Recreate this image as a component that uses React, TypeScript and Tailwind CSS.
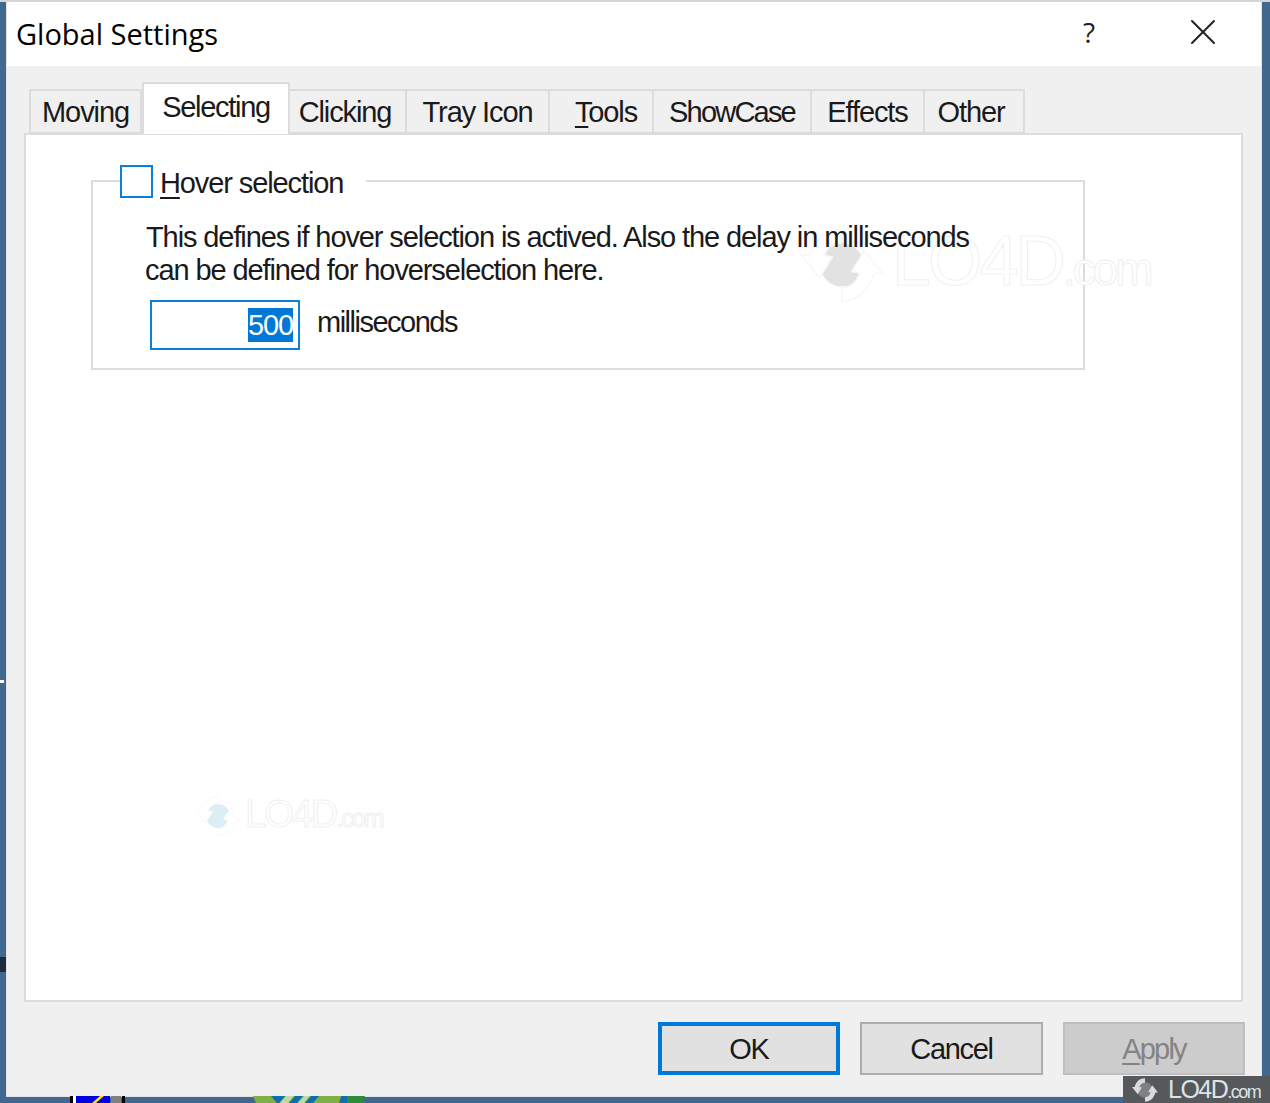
import React from 'react';
import { X } from 'lucide-react';

const tabs = [
  { label: 'Moving', w: 'w-[113px]', extra: 'tracking-[-1.1px]' },
  { label: 'Selecting', w: 'w-[148px]', extra: 'tracking-[-1.3px]', active: true },
  { label: 'Clicking', w: 'w-[117px]', extra: 'pr-[5px] tracking-[-1.1px]' },
  { label: 'Tray Icon', w: 'w-[143px]', extra: 'tracking-[-1.1px]' },
  { label: 'Tools', w: 'w-[104px]', extra: 'pl-[10px] tracking-[-1.1px]', mnemonic: true },
  { label: 'ShowCase', w: 'w-[158px]', extra: 'tracking-[-1.8px]' },
  { label: 'Effects', w: 'w-[113px]', extra: 'tracking-[-1.1px]' },
  { label: 'Other', w: 'w-[100px]', extra: 'pr-[6px] tracking-[-1.1px]' },
];

const Watermark = ({ className, big }: { className: string; big?: boolean }) => (
  <div className={`absolute flex items-center pointer-events-none ${className}`}>
    <svg viewBox="0 0 100 100" className={big ? 'w-[100px] h-[80px]' : 'w-[54px] h-[44px]'}>
      <circle cx="50" cy="50" r="27" fill={big ? '#e2e2e2' : '#dcedf5'} />
      <path d="M50 5 C30 5 16 18 10 38 L0 38 L22 66 L38 40 L28 38 C32 28 40 22 50 22 Z" fill="#ffffff" stroke="#f7f7f7" strokeWidth="2" />
      <path d="M50 95 C70 95 84 82 90 60 L100 60 L78 32 L62 58 L72 60 C68 72 60 78 50 78 Z" fill="#ffffff" stroke="#f7f7f7" strokeWidth="2" />
    </svg>
    <span className={`font-['Liberation_Sans',sans-serif] text-white ${big ? 'text-[70px] leading-[60px] tracking-[-3px]' : 'text-[38px] leading-[34px] tracking-[-2px]'}`} style={{ WebkitTextStroke: '1px #f0f0f0' }}>
      LO4D<span className={big ? 'text-[46px]' : 'text-[25px]'}>.com</span>
    </span>
  </div>
);

export default function App() {
  return (
    <div className="relative w-[1270px] h-[1103px] overflow-hidden bg-[#41688f] font-['Liberation_Sans',sans-serif] text-[#1a1a1a]">
      {/* bits of the desktop showing under the dialog */}
      <svg className="absolute left-[70px] top-[1096px]" width="56" height="7" viewBox="0 0 56 7">
        <rect x="0" width="3" height="7" fill="#000" />
        <rect x="3" width="3" height="7" fill="#fff" />
        <rect x="6" width="34" height="7" fill="#0000e0" />
        <path d="M22 7 L30 0 L34 0 L26 7 Z" fill="#ffe000" />
        <rect x="41" width="10" height="7" fill="#808080" />
        <rect x="52" width="3" height="7" fill="#000" />
      </svg>
      <svg className="absolute left-[253px] top-[1096px]" width="114" height="7" viewBox="0 0 114 7">
        <path d="M0 0 H88 L86 7 H3 Z" fill="#7fb044" />
        <path d="M18 0 H32 L26 7 H24 Z M42 0 H50 L44 7 H36 Z M58 0 H66 L60 7 H52 Z" fill="#0b6fb0" />
        <path d="M33 0 H41 L35 7 H27 Z M51 0 H57 L51 7 H45 Z" fill="#c3d8a8" />
        <rect x="88" width="6" height="7" fill="#0b6fb0" />
        <path d="M94 0 H112 L110 7 H94 Z" fill="#2f8a3a" />
      </svg>
      <div className="absolute left-0 top-[680px] w-[4px] h-[3px] bg-white" />
      <div className="absolute left-0 top-[957px] w-[6px] h-[15px] bg-[#1c2c3c]" />

      <div className="h-[2px] bg-[#d6d6d6]" />
      <div className="ml-[6px] w-[1256px] h-[1095px] flex flex-col bg-[#f0f0f0] border-l border-r border-b border-[#e4e4e4]">
        <div className="h-[64px] shrink-0 bg-white flex items-center pl-[9px]">
          <span className="font-['Open_Sans',sans-serif] text-[29px] text-black">Global Settings</span>
          <span className="ml-auto mr-[86px] mb-[4px] text-[28px] text-[#222] font-['Open_Sans',sans-serif]">?</span>
          <X className="mr-[36px] mb-[4px] w-[44px] h-[44px] text-[#222]" strokeWidth={1.1} />
        </div>

        <div className="relative pl-[17px] pt-[16px] pr-[19px] flex-1 flex flex-col">
          <div className="flex items-end h-[52px] ml-[5px] relative z-10 -mb-[1px]">
            {tabs.map((t) => (
              <div
                key={t.label}
                className={`${t.w} ${t.extra} flex justify-center text-[29px] leading-[39px] border-t-2 border-r-2 border-[#dcdcdc] ${
                  t.active
                    ? 'h-[52px] bg-white border-l-2 pt-[4px] border-b-0'
                    : 'h-[45px] bg-[#f0f0f0] pt-[2px] first:border-l-2 border-b-2'
                }`}
              >
                {t.mnemonic ? (
                  <span>
                    <span className="underline underline-offset-[4px]">T</span>
                    {t.label.slice(1)}
                  </span>
                ) : (
                  t.label
                )}
              </div>
            ))}
          </div>

          <div className="h-[869px] w-[1219px] bg-white border-2 border-[#dcdcdc] pl-[65px] pt-[45px]">
            <div className="w-[994px] h-[190px] border-2 border-[#dcdcdc]">
              <div className="flex items-center -mt-[17px] ml-[27px] bg-white w-[246px] h-[32px]">
                <div className="w-[33px] h-[33px] border-2 border-[#0a7fdc] bg-white" />
                <span className="ml-[7px] mt-[3px] text-[29px] leading-[36px] tracking-[-1.1px]">
                  <span className="underline underline-offset-[4px]">H</span>over selection
                </span>
              </div>
              <div className="relative z-20 mt-[24px] ml-[53px] text-[29px] leading-[33px] tracking-[-1.1px]">
                <div>This defines if hover selection is actived. Also the delay in milliseconds</div>
                <div className="-ml-[1px]">can be defined for hoverselection here.</div>
              </div>
              <div className="flex items-center mt-[13px] ml-[57px]">
                <div className="w-[150px] h-[50px] border-2 border-[#0a7fdc] flex items-center justify-end pr-[5px]">
                  <span className="bg-[#0078d7] text-white text-[29px] leading-[34px] tracking-[-1.1px]">500</span>
                </div>
                <span className="ml-[17px] text-[29px] tracking-[-1.5px] mb-[5px]">milliseconds</span>
              </div>
            </div>
          </div>

          <div className="flex justify-end gap-[20px] mt-[20px] -mr-[3px]">
            <button className="w-[182px] h-[53px] pt-[2px] bg-[#e1e1e1] border-[4px] border-[#0078d7] text-[29px] tracking-[-1.1px]">OK</button>
            <button className="w-[183px] h-[53px] pt-[2px] bg-[#e1e1e1] border-2 border-[#adadad] text-[29px] tracking-[-1.3px]">Cancel</button>
            <button className="w-[182px] h-[53px] pt-[2px] bg-[#cccccc] border-2 border-[#bfbfbf] text-[29px] tracking-[-1.8px] text-[#838383]">
              <span className="underline underline-offset-[4px]">A</span>pply
            </button>
          </div>
        </div>
      </div>

      <Watermark big className="left-[792px] top-[225px]" />
      <Watermark className="left-[191px] top-[794px]" />

      <div className="absolute left-[1123px] top-[1076px] w-[147px] h-[27px] bg-[#55595c] flex items-center pl-[6px] text-[#dfe3e6]">
        <svg viewBox="0 0 100 100" className="w-[32px] h-[26px]">
          <circle cx="50" cy="50" r="30" fill="#7d8184" />
          <path d="M50 5 C30 5 16 18 10 38 L0 38 L22 66 L38 40 L28 38 C32 28 40 22 50 22 Z" fill="#d8dbdd" />
          <path d="M50 95 C70 95 84 82 90 60 L100 60 L78 32 L62 58 L72 60 C68 72 60 78 50 78 Z" fill="#d8dbdd" />
        </svg>
        <span className="ml-[7px] text-[25px] tracking-[-1.5px]">LO4D<span className="text-[18px]">.com</span></span>
      </div>
    </div>
  );
}
